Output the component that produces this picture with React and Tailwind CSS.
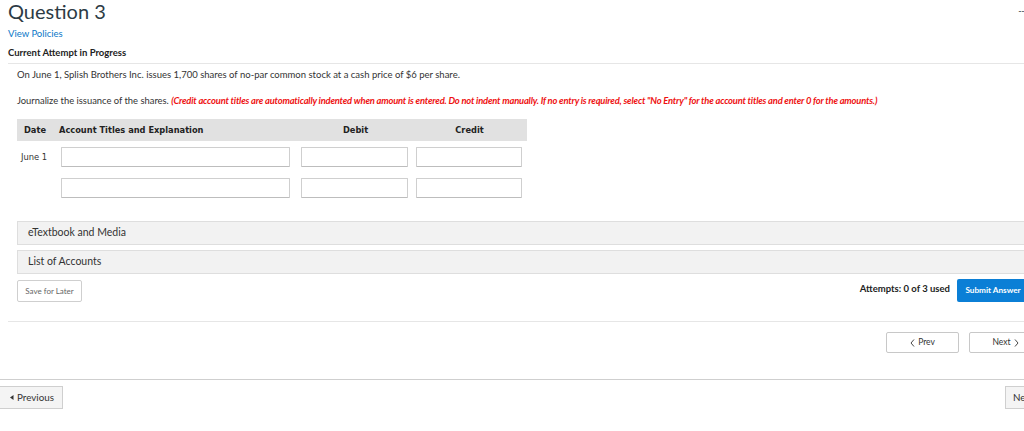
import React from "react";

const Chev = ({ dir = "left" }) => (
  <svg width="5" height="8" viewBox="0 0 5 8" className="inline-block">
    {dir === "left" ? (
      <polyline points="4,0.5 1,4 4,7.5" fill="none" stroke="#333" strokeWidth="0.9" />
    ) : (
      <polyline points="1,0.5 4,4 1,7.5" fill="none" stroke="#333" strokeWidth="0.9" />
    )}
  </svg>
);

function Input({ w }) {
  return <div className={`h-[20px] bg-white border border-[#cfcfcf] border-b-[#bdbdbd] rounded-[1px] ${w}`} />;
}

export default function App() {
  return (
    <div className="w-[1024px] h-[431px] overflow-hidden bg-white font-['Lato',sans-serif] text-[#2d2d2d]">
      <div className="pl-2 w-[1060px]">
        {/* header */}
        <div className="flex w-[1016px] justify-between">
          <div className="text-[20px] leading-[20px] mt-[1px] text-[#2d3b45]">Question 3</div>
          <div className="text-[9px] leading-[11px] mt-[5px] text-[#2d3b45] tracking-[-0.5px]">--</div>
        </div>
        <div className="mt-[7px] text-[9.5px] leading-[11px] text-[#0a78c8]">View Policies</div>
        <div className="mt-[8px] text-[9.5px] leading-[11px] font-bold text-[#222]">Current Attempt in Progress</div>
        <div className="mt-[5px] border-t border-[#e6e6e6] w-[1040px]" />

        <div className="ml-[9px]">
          <div className="mt-[5px] text-[9.5px] leading-[11px] text-[#333] whitespace-nowrap">
            On June 1, Splish Brothers Inc. issues 1,700 shares of no-par common stock at a cash price of $6 per share.
          </div>
          <div className="mt-[15px] text-[9.4px] leading-[11px] text-[#333] whitespace-nowrap">
            Journalize the issuance of the shares.{" "}
            <span className="text-[#ee1111] font-bold italic tracking-[-0.19px]">
              (Credit account titles are automatically indented when amount is entered. Do not indent manually. If no entry is required, select "No Entry" for the account titles and enter 0 for the amounts.)
            </span>
          </div>

          {/* table */}
          <div className="mt-[13px] w-[510px] font-['DejaVu_Sans_Condensed','DejaVu_Sans',sans-serif]">
            <div className="flex items-center h-[22px] bg-[#e1e1e1] text-[9.2px] font-bold text-[#222]">
              <div className="w-[40px] pl-[7px]">Date</div>
              <div className="w-[239px] pl-[2px]">Account Titles and Explanation</div>
              <div className="w-[116px] text-center pl-[3px]">Debit</div>
              <div className="w-[115px] text-center">Credit</div>
            </div>
            <div className="flex items-center mt-[6px]">
              <div className="w-[44px] pl-[4px] text-[9.3px] text-[#333]">June 1</div>
              <Input w="w-[229px]" />
              <div className="w-[11px]" />
              <Input w="w-[107px]" />
              <div className="w-[8px]" />
              <Input w="w-[106px]" />
            </div>
            <div className="flex items-center mt-[11px]">
              <div className="w-[44px]" />
              <Input w="w-[229px]" />
              <div className="w-[11px]" />
              <Input w="w-[107px]" />
              <div className="w-[8px]" />
              <Input w="w-[106px]" />
            </div>
          </div>

          {/* accordions */}
          <div className="mt-[23px] w-[1030px] h-[24px] flex items-center pl-[10px] bg-[#f2f2f2] border border-[#dedede] text-[10.5px] text-[#333]">
            eTextbook and Media
          </div>
          <div className="mt-[5px] w-[1030px] h-[24px] flex items-center pl-[10px] bg-[#f2f2f2] border border-[#dedede] text-[10.5px] text-[#333]">
            List of Accounts
          </div>

          <div className="mt-[6px] w-[1012px] flex items-start justify-between">
            <div className="h-[22px] w-[65px] flex items-center justify-center border border-[#cfcfcf] rounded-[2px] text-[8px] text-[#666]">
              Save for Later
            </div>
            <div className="flex items-center">
              <div className="text-[9.5px] font-bold text-[#222] mr-[7px] -mt-[3px]">Attempts: 0 of 3 used</div>
              <div className="h-[23px] w-[72px] -mt-[1px] flex items-center justify-center rounded-[2px] bg-[#0b7fd6] text-white text-[8.2px] font-bold">
                Submit Answer
              </div>
            </div>
          </div>
        </div>

        <div className="mt-[19px] border-t border-[#e6e6e6] w-[1040px]" />
        <div className="mt-[10px] w-[1034px] flex justify-end gap-[10px]">
          <div className="h-[21px] w-[73px] flex items-center justify-center gap-[3px] border border-[#c8c8c8] rounded-[2px] text-[8.5px] text-[#333]">
            <Chev dir="left" />
            <span>Prev</span>
          </div>
          <div className="h-[21px] w-[73px] flex items-center justify-center gap-[3px] border border-[#c8c8c8] rounded-[2px] text-[8.5px] text-[#333]">
            <span>Next</span>
            <Chev dir="right" />
          </div>
        </div>
      </div>

      {/* bottom bar */}
      <div className="mt-[26px] border-t border-[#cfcfcf] w-[1024px]" />
      <div className="mt-[6px] w-[1050px] flex justify-between">
        <div className="h-[23px] w-[63px] flex items-center pl-[10px] gap-[3px] bg-[#f4f4f4] border border-[#cfcfcf] border-l-0 text-[9.8px] text-[#333]">
          <svg width="4" height="5" viewBox="0 0 4 5"><polygon points="3.5,0 3.5,5 0,2.5" fill="#333" /></svg>
          <span>Previous</span>
        </div>
        <div className="h-[23px] w-[45px] flex items-center pl-[7px] bg-[#f4f4f4] border border-[#cfcfcf] text-[9.8px] text-[#333]">
          Next
        </div>
      </div>
    </div>
  );
}
